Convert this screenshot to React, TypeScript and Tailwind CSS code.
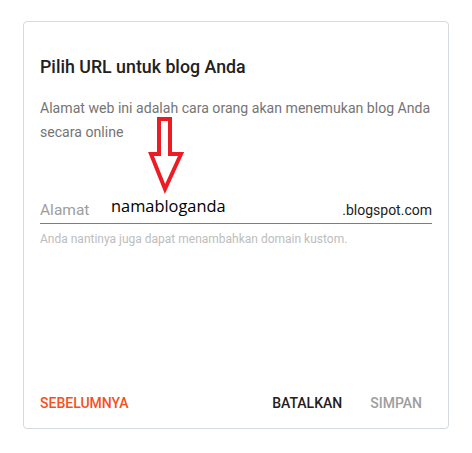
export default function App() {
  return (
    <div className="relative min-h-[453px] w-[472px] bg-white font-['Roboto',sans-serif]">
      <div className="ml-[23px] pt-[21px]">
        <div className="flex h-[408px] w-[426px] flex-col rounded-[4px] border border-[#d5dade] px-4 pt-[33px] pb-[15px]">
          <h2 className="text-[17.8px] leading-6 font-medium text-[#212121]">Pilih URL untuk blog Anda</h2>
          <p className="mt-[17px] whitespace-nowrap text-[14.1px] leading-6 text-[#757575]">
            Alamat web ini adalah cara orang akan menemukan blog Anda
            <br />
            secara online
          </p>

          <div className="mt-[54px] flex items-baseline border-b border-[#e9572f] pb-[1px]">
            <span className="text-[15.5px] leading-6 text-[#9e9e9e]">Alamat</span>
            <span className="flex-1" />
            <span className="text-[14px] leading-6 text-[#212121]">.blogspot.com</span>
          </div>
          <p className="mt-[7px] text-[12px] leading-4 text-[#bdbdbd]">
            Anda nantinya juga dapat menambahkan domain kustom.
          </p>

          <div className="mt-auto flex items-center">
            <button className="text-[14px] leading-5 font-medium text-[#f4511e]">SEBELUMNYA</button>
            <span className="flex-1" />
            <button className="text-[14px] leading-5 font-medium text-[#212121]">BATALKAN</button>
            <button className="ml-[28px] mr-[10px] text-[14px] leading-5 font-medium text-[#9e9e9e]">SIMPAN</button>
          </div>
        </div>
      </div>

      {/* annotation overlay */}
      <svg className="absolute top-[113px] left-[145px]" width="42" height="82" viewBox="0 0 42 82">
        <polygon
          points="14,6 25,6 25,41 36,41 20,76 6,41 14,41"
          fill="none"
          stroke="#ed1c24"
          strokeWidth="4"
          strokeLinejoin="miter"
        />
      </svg>
      <span className="absolute top-[195px] left-[111px] font-['Open_Sans',sans-serif] text-[16.4px] leading-[22px] text-black">
        namabloganda
      </span>
    </div>
  );
}
